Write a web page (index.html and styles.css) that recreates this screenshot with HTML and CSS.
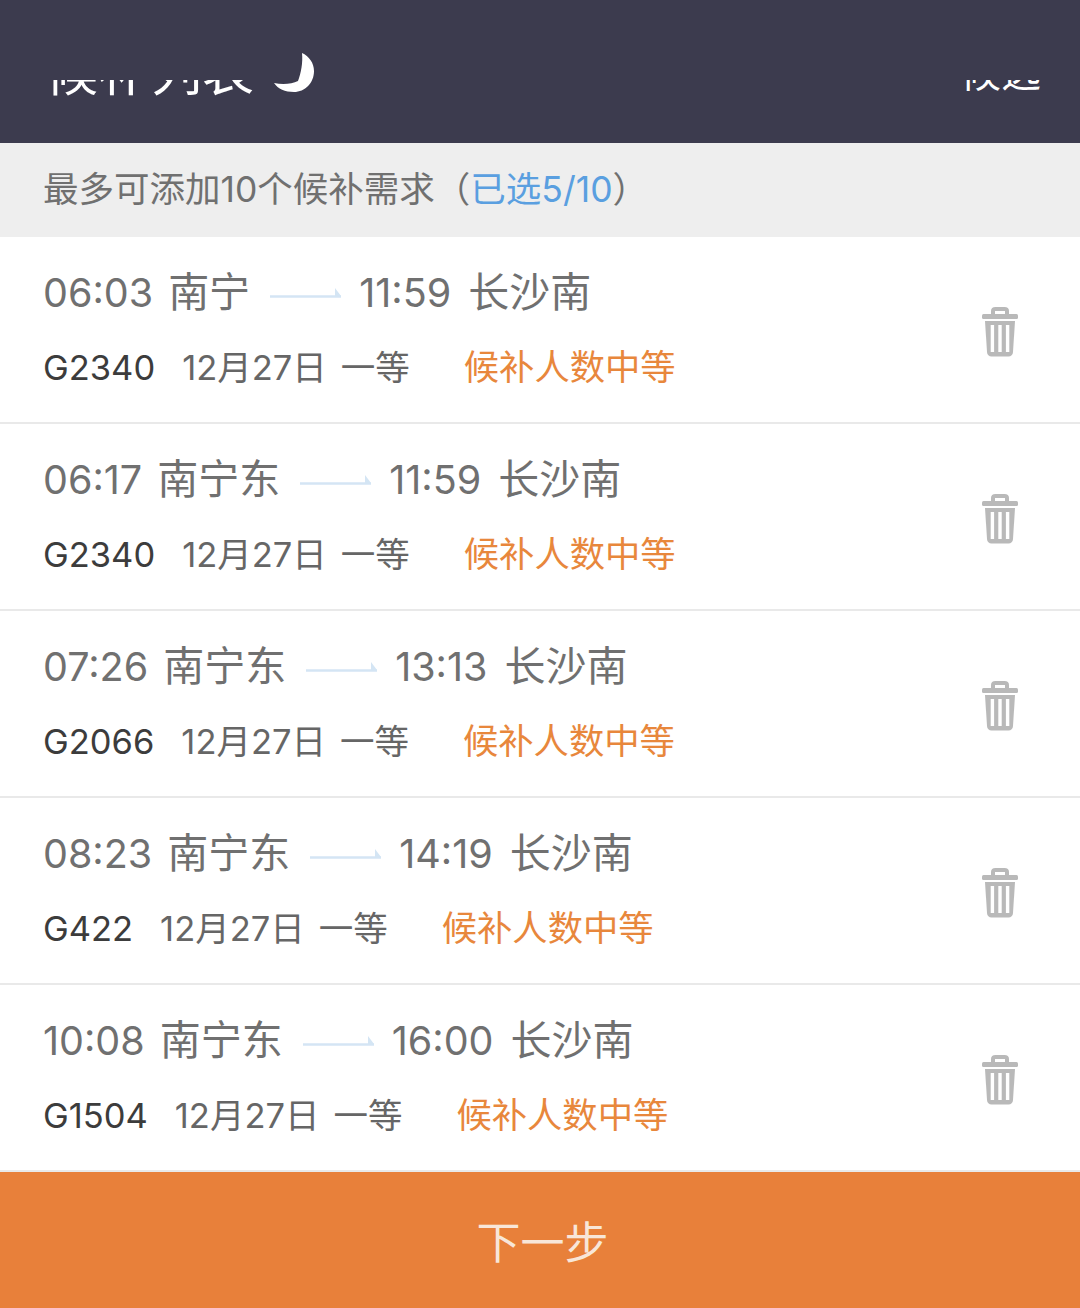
FILE: index.html
```html
<!DOCTYPE html>
<html>
	<head>
		<meta charset="utf-8" />
		<title>候补列表</title>
		<link rel="stylesheet" href="styles.css">
	</head>
	<body>
		<svg class="defs" width="0" height="0">
			<symbol id="trash" viewBox="0 0 36 50">
				<path d="M11 8V4C11 2.500 12 2 13.500 2H22.500C24 2 25 2.500 25 4V8" fill="none" stroke="currentColor" stroke-width="4"/>
				<rect x="0" y="7" width="36" height="5" rx="1.500" fill="currentColor"/>
				<path d="M3 14H33L31 45C30.800 47.800 29 49.500 26.500 49.500H9.500C7 49.500 5.200 47.800 5 45Z" fill="currentColor"/>
				<rect x="8.700" y="18" width="3.400" height="27" fill="#fff"/>
				<rect x="16.300" y="18" width="3.400" height="27" fill="#fff"/>
				<rect x="23.900" y="18" width="3.400" height="27" fill="#fff"/>
			</symbol>
			<symbol id="arrow" viewBox="0 0 72 14">
				<path d="M0 10.500H71" stroke="currentColor" stroke-width="2.500" fill="none"/>
				<path d="M65 2L71 10H65Z" fill="currentColor"/>
			</symbol>
		</svg>
		<div class="page">
			<header class="topBar">
				<div class="titleGroup">
					<span class="title">候补列表</span>
					<svg class="moon" width="43" height="42" viewBox="0 0 43 42">
						<path d="M30 2C37 5 42 12 42 20C42 32 33 41 22 41C13 41 6 38 2 32C11 34 20 33 26 30C29 22 31 12 30 2Z" fill="#fff"/>
					</svg>
				</div>
				<span class="confirm">候选</span>
			</header>
			<div class="notice">最多可添加10个候补需求<span class="bracket">（</span><span class="selected">已选5/10</span>）</div>
			<main class="list">
				<div class="row">
					<div class="info">
						<div class="route">
							<span class="time">06:03</span><span class="station">南宁</span>
							<svg class="arrow"><use href="#arrow"/></svg>
							<span class="time">11:59</span><span class="station">长沙南</span>
						</div>
						<div class="detail">
							<span class="train">G2340</span><span class="date">12月27日</span><span class="seat">一等</span><span class="status">候补人数中等</span>
						</div>
					</div>
					<svg class="trash"><use href="#trash"/></svg>
				</div>
				<div class="row">
					<div class="info">
						<div class="route">
							<span class="time">06:17</span><span class="station">南宁东</span>
							<svg class="arrow"><use href="#arrow"/></svg>
							<span class="time">11:59</span><span class="station">长沙南</span>
						</div>
						<div class="detail">
							<span class="train">G2340</span><span class="date">12月27日</span><span class="seat">一等</span><span class="status">候补人数中等</span>
						</div>
					</div>
					<svg class="trash"><use href="#trash"/></svg>
				</div>
				<div class="row">
					<div class="info">
						<div class="route">
							<span class="time">07:26</span><span class="station">南宁东</span>
							<svg class="arrow"><use href="#arrow"/></svg>
							<span class="time">13:13</span><span class="station">长沙南</span>
						</div>
						<div class="detail">
							<span class="train">G2066</span><span class="date">12月27日</span><span class="seat">一等</span><span class="status">候补人数中等</span>
						</div>
					</div>
					<svg class="trash"><use href="#trash"/></svg>
				</div>
				<div class="row">
					<div class="info">
						<div class="route">
							<span class="time">08:23</span><span class="station">南宁东</span>
							<svg class="arrow"><use href="#arrow"/></svg>
							<span class="time">14:19</span><span class="station">长沙南</span>
						</div>
						<div class="detail">
							<span class="train">G422</span><span class="date">12月27日</span><span class="seat">一等</span><span class="status">候补人数中等</span>
						</div>
					</div>
					<svg class="trash"><use href="#trash"/></svg>
				</div>
				<div class="row">
					<div class="info">
						<div class="route">
							<span class="time">10:08</span><span class="station">南宁东</span>
							<svg class="arrow"><use href="#arrow"/></svg>
							<span class="time">16:00</span><span class="station">长沙南</span>
						</div>
						<div class="detail">
							<span class="train">G1504</span><span class="date">12月27日</span><span class="seat">一等</span><span class="status">候补人数中等</span>
						</div>
					</div>
					<svg class="trash"><use href="#trash"/></svg>
				</div>
			</main>
			<footer class="nextBtn">下一步</footer>
		</div>
	</body>
</html>
```

FILE: styles.css
```css
*,
*::before,
*::after{
	box-sizing: border-box;
}
body{
	margin: 0;
	font-family: Inter, "Noto Sans CJK SC", sans-serif;
	background: #fff;
}
.defs{
	display: block;
	height: 0;
}
.page{
	width: 1080px;
	height: 1308px;
	display: flex;
	flex-direction: column;
	overflow: hidden;
}
.topBar{
	height: 143px;
	flex: none;
	background: #3c3b4e;
	color: #fff;
	display: flex;
	align-items: flex-start;
	justify-content: space-between;
	padding: 44px 39px 0 46px;
}
.titleGroup{
	display: flex;
	align-items: center;
	gap: 18px;
}
.title{
	font-size: 52px;
	line-height: 58px;
	/* 上半部分被遮住，只露出字的底部 */
	clip-path: inset(62% 0 0 0);
}
.moon{
	margin-top: -2px;
}
.confirm{
	font-size: 40px;
	line-height: 58px;
	clip-path: inset(62% 0 0 0);
}
.notice{
	height: 94px;
	flex: none;
	background: #eeeeee;
	color: #707070;
	font-size: 35.500px;
	line-height: 94px;
	padding-left: 43px;
	white-space: nowrap;
}
.selected{
	color: #5a9fe0;
}
.list{
	flex: 1;
	display: flex;
	flex-direction: column;
}
.row{
	flex: 1;
	display: flex;
	align-items: center;
	justify-content: space-between;
	padding: 0 62px 0 43px;
	border-bottom: 2px solid #e9e9e9;
}
.info{
	display: flex;
	flex-direction: column;
	gap: 32px;
	margin-top: -21px;
}
.route{
	display: flex;
	align-items: baseline;
	height: 48px;
	font-size: 39.500px;
	color: #707070;
}
.station{
	margin-left: 15px;
	font-size: 41px;
}
.station:last-child{
	margin-left: 17px;
}
.arrow{
	width: 72px;
	height: 14px;
	margin: 20px 17px 0 20px;
	align-self: center;
	color: #d4e5f4;
}
.detail{
	display: flex;
	align-items: baseline;
	height: 40px;
	font-size: 34.500px;
	color: #666;
}
.train{
	color: #3c3c3c;
}
.date{
	margin-left: 27px;
}
.seat{
	margin-left: 14px;
}
.status{
	margin-left: 54px;
	font-size: 35.300px;
	color: #e8873c;
}
.trash{
	width: 36px;
	height: 50px;
	margin-top: 4px;
	color: #b9b9b9;
}
.nextBtn{
	height: 136px;
	flex: none;
	background: #e8803a;
	color: #f8e6d8;
	font-size: 44px;
	display: flex;
	align-items: center;
	justify-content: center;
	padding-left: 5px;
}
```
